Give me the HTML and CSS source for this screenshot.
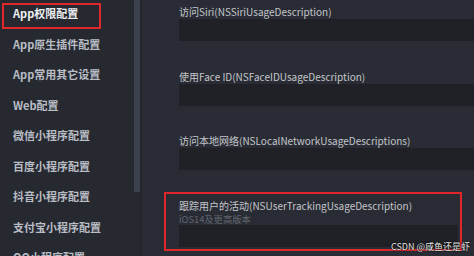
FILE: index.html
```html
<!DOCTYPE html>
<html lang="zh">
<head>
<meta charset="utf-8">
<link rel="stylesheet" href="styles.css">
</head>
<body>
<div class="app">
  <aside class="sidebar">
    <ul class="nav">
      <li class="nav-item active">App权限配置</li>
      <li class="nav-item">App原生插件配置</li>
      <li class="nav-item">App常用其它设置</li>
      <li class="nav-item">Web配置</li>
      <li class="nav-item">微信小程序配置</li>
      <li class="nav-item">百度小程序配置</li>
      <li class="nav-item">抖音小程序配置</li>
      <li class="nav-item">支付宝小程序配置</li>
      <li class="nav-item">QQ小程序配置</li>
    </ul>
    <div class="scroll-track"><div class="scroll-thumb"></div></div>
  </aside>
  <div class="divider"></div>
  <main class="main">
    <section class="field">
      <div class="label">访问Siri(NSSiriUsageDescription)</div>
      <div class="input"></div>
    </section>
    <section class="field">
      <div class="label">使用Face ID(NSFaceIDUsageDescription)</div>
      <div class="input"></div>
    </section>
    <section class="field">
      <div class="label">访问本地网络(NSLocalNetworkUsageDescriptions)</div>
      <div class="input"></div>
    </section>
    <section class="field highlight">
      <div class="label">跟踪用户的活动(NSUserTrackingUsageDescription)</div>
      <div class="hint">iOS14及更高版本</div>
      <div class="input"></div>
    </section>
  </main>
  <div class="watermark">CSDN @咸鱼还是虾</div>
</div>
</body>
</html>
```

FILE: styles.css
```css
html, body {
  margin: 0;
  padding: 0;
  background: #292c34;
  font-family: "Noto Sans CJK SC", "Noto Sans", sans-serif;
}
.app {
  position: relative;
  display: flex;
  width: 474px;
  height: 256px;
  overflow: hidden;
}
.sidebar {
  display: flex;
  flex: 0 0 140px;
  background: #262930;
}
.nav {
  list-style: none;
  margin: -2px 0 0 0;
  padding: 0;
  width: 134px;
}
.nav-item {
  position: relative;
  height: 30.5px;
  line-height: 30.5px;
  padding-left: 13px;
  font-size: 11px;
  font-weight: 700;
  color: #b9bdc5;
  white-space: nowrap;
}
.nav-item.active {
  color: #eceef2;
}
.nav-item.active::after {
  content: "";
  position: absolute;
  left: 2px;
  top: 5px;
  width: 95px;
  height: 22px;
  border: 2px solid #e0282c;
}
.scroll-track {
  width: 6px;
  background: #262930;
}
.scroll-thumb {
  height: 192px;
  background: #3b424e;
}
.divider {
  flex: 0 0 2px;
  background: #23262c;
}
.main {
  flex: 1;
  display: flex;
  flex-direction: column;
  gap: 28.5px;
  padding: 5px 0 0 37px;
  min-width: 0;
}
.field {
  display: flex;
  flex-direction: column;
}
.label {
  height: 14px;
  line-height: 14px;
  font-size: 10px;
  color: #c4c6cb;
  white-space: nowrap;
}
.hint {
  height: 12px;
  line-height: 12px;
  font-size: 9.3px;
  color: #62666e;
  white-space: nowrap;
}
.input {
  height: 22px;
  background: #1f2126;
  margin-right: -10px;
}
.highlight {
  margin: -6.5px 12px 0 -15px;
  padding: 4.5px 0 0 13px;
  border: 2px solid #e0282c;
  height: 50.5px;
  overflow: hidden;
}
.highlight .input {
  margin-right: 2px;
}
.watermark {
  position: absolute;
  right: 4px;
  bottom: 4px;
  font-size: 9px;
  line-height: 11px;
  color: #e6e6e6;
  text-shadow: 0 0 2px #000, 0 0 1px #000;
}
```
